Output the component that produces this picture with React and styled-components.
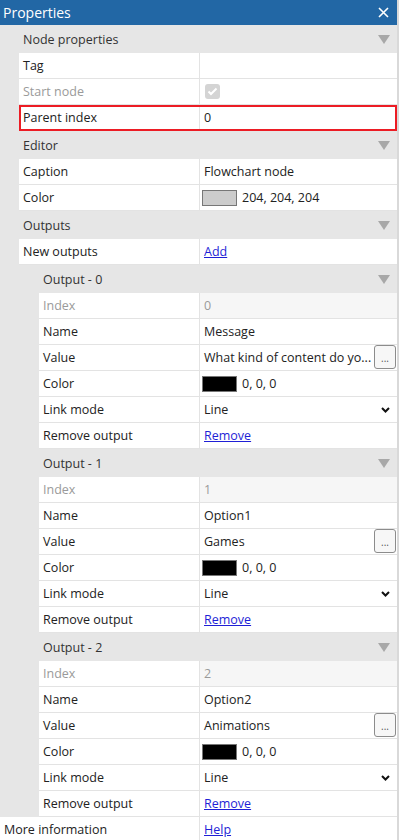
import React from "react";
import styled, { createGlobalStyle } from "styled-components";

const GlobalStyle = createGlobalStyle`
  html, body {
    margin: 0;
    padding: 0;
    background: #ffffff;
  }
  body {
    font-family: "Open Sans", "Noto Sans", sans-serif;
    font-size: 12.5px;
    color: #222222;
  }
`;

// value text is shown already shortened, as the grid displays it
const outputs = [
  { index: 0, name: "Message", value: "What kind of content do yo..." },
  { index: 1, name: "Option1", value: "Games" },
  { index: 2, name: "Option2", value: "Animations" },
];

function Triangle() {
  return (
    <svg width="12" height="9" viewBox="0 0 12 9">
      <polygon points="0,0 12,0 6,9" fill="#a8a8a8" />
    </svg>
  );
}

function Chevron() {
  return (
    <svg width="9" height="6" viewBox="0 0 9 6">
      <polyline points="1,1 4.5,4.5 8,1" fill="none" stroke="#111" strokeWidth="2" />
    </svg>
  );
}

function Section({ title, indent, children }) {
  return (
    <SectionBox $indent={indent}>
      <CategoryHeader>
        <span>{title}</span>
        <Triangle />
      </CategoryHeader>
      {children}
    </SectionBox>
  );
}

function Prop({ label, muted, readonly, highlighted, children }) {
  return (
    <Row $highlighted={highlighted}>
      <Label $muted={muted}>{label}</Label>
      <Value $readonly={readonly} $muted={muted}>
        {children}
      </Value>
    </Row>
  );
}

function ColorValue({ color, text }) {
  return (
    <>
      <Swatch style={{ background: color }} />
      <span>{text}</span>
    </>
  );
}

export default function App() {
  return (
    <>
      <GlobalStyle />
      <Panel>
        <TitleBar>
          <span>Properties</span>
          <svg width="11" height="11" viewBox="0 0 11 11">
            <path d="M1 1 L10 10 M10 1 L1 10" stroke="#fff" strokeWidth="1.6" />
          </svg>
        </TitleBar>

        <Section title="Node properties" indent={19}>
          <Prop label="Tag" />
          <Prop label="Start node" muted>
            <CheckBox>
              <svg width="11" height="9" viewBox="0 0 11 9">
                <polyline points="1.5,4.5 4,7 9.5,1.5" fill="none" stroke="#fff" strokeWidth="2" />
              </svg>
            </CheckBox>
          </Prop>
          <Prop label="Parent index" highlighted>
            0
          </Prop>
        </Section>

        <Section title="Editor" indent={19}>
          <Prop label="Caption">Flowchart node</Prop>
          <Prop label="Color">
            <ColorValue color="#cccccc" text="204, 204, 204" />
          </Prop>
        </Section>

        <Section title="Outputs" indent={19}>
          <Prop label="New outputs">
            <Link href="#">Add</Link>
          </Prop>
          {outputs.map((o) => (
            <Section key={o.index} title={`Output - ${o.index}`} indent={20}>
              <Prop label="Index" muted readonly>
                {o.index}
              </Prop>
              <Prop label="Name">{o.name}</Prop>
              <Prop label="Value">
                <ValueText>{o.value}</ValueText>
                <DotsButton>...</DotsButton>
              </Prop>
              <Prop label="Color">
                <ColorValue color="#000000" text="0, 0, 0" />
              </Prop>
              <Prop label="Link mode">
                <SelectBox>
                  <span>Line</span>
                  <Chevron />
                </SelectBox>
              </Prop>
              <Prop label="Remove output">
                <Link href="#">Remove</Link>
              </Prop>
            </Section>
          ))}
        </Section>

        <Row>
          <Label>More information</Label>
          <Value>
            <Link href="#">Help</Link>
          </Value>
        </Row>
      </Panel>
    </>
  );
}

const Panel = styled.div`
  width: 397px;
  border-right: 2px solid #d9d9d9;
  background: #e6e6e6;
  min-height: 840px;
`;

const TitleBar = styled.div`
  height: 25px;
  background: #2267a5;
  color: #ffffff;
  font-size: 14px;
  display: flex;
  align-items: center;
  justify-content: space-between;
  padding: 0 8px 0 3px;
`;

const SectionBox = styled.div`
  background: #e6e6e6;
  padding-left: ${(p) => p.$indent}px;
`;

const CategoryHeader = styled.div`
  height: 28px;
  display: flex;
  align-items: center;
  justify-content: space-between;
  padding: 0 7px 0 4px;
  color: #333333;
`;

const Row = styled.div`
  display: grid;
  grid-template-columns: 1fr 198px;
  height: 26px;
  box-sizing: border-box;
  background: #ffffff;
  border-bottom: 1px solid #e3e3e3;
  outline: ${(p) => (p.$highlighted ? "2px solid #ec1c24" : "none")};
  outline-offset: -2px;
`;

const Label = styled.div`
  display: flex;
  align-items: center;
  padding-left: 4px;
  white-space: nowrap;
  overflow: hidden;
  color: ${(p) => (p.$muted ? "#9a9a9a" : "#222222")};
`;

const Value = styled.div`
  display: flex;
  align-items: center;
  min-width: 0;
  padding: 0 1px 0 4px;
  border-left: 1px solid #e3e3e3;
  background: ${(p) => (p.$readonly ? "#f6f6f6" : "#ffffff")};
  color: ${(p) => (p.$muted ? "#9a9a9a" : "#222222")};
  white-space: nowrap;
`;

const ValueText = styled.span`
  flex: 1;
  min-width: 0;
`;

const DotsButton = styled.div`
  width: 22px;
  height: 24px;
  box-sizing: border-box;
  margin-left: 2px;
  margin-top: -2px;
  border: 1px solid #8c8c8c;
  border-radius: 3px;
  background: #f7f7f7;
  color: #555555;
  font-size: 10px;
  display: flex;
  align-items: flex-end;
  justify-content: center;
  padding-bottom: 5px;
  line-height: 1;
`;

const Swatch = styled.span`
  width: 35px;
  height: 16px;
  box-sizing: border-box;
  margin-left: -2px;
  margin-right: 5px;
  border: 1px solid #777777;
`;

const CheckBox = styled.span`
  width: 15px;
  height: 15px;
  border-radius: 3px;
  background: #d4d4d4;
  display: flex;
  align-items: center;
  justify-content: center;
  margin-left: 1px;
`;

const SelectBox = styled.div`
  flex: 1;
  display: flex;
  align-items: center;
  justify-content: space-between;
  padding-right: 6px;
`;

const Link = styled.a`
  color: #1f1fd6;
  text-decoration: underline;
`;
